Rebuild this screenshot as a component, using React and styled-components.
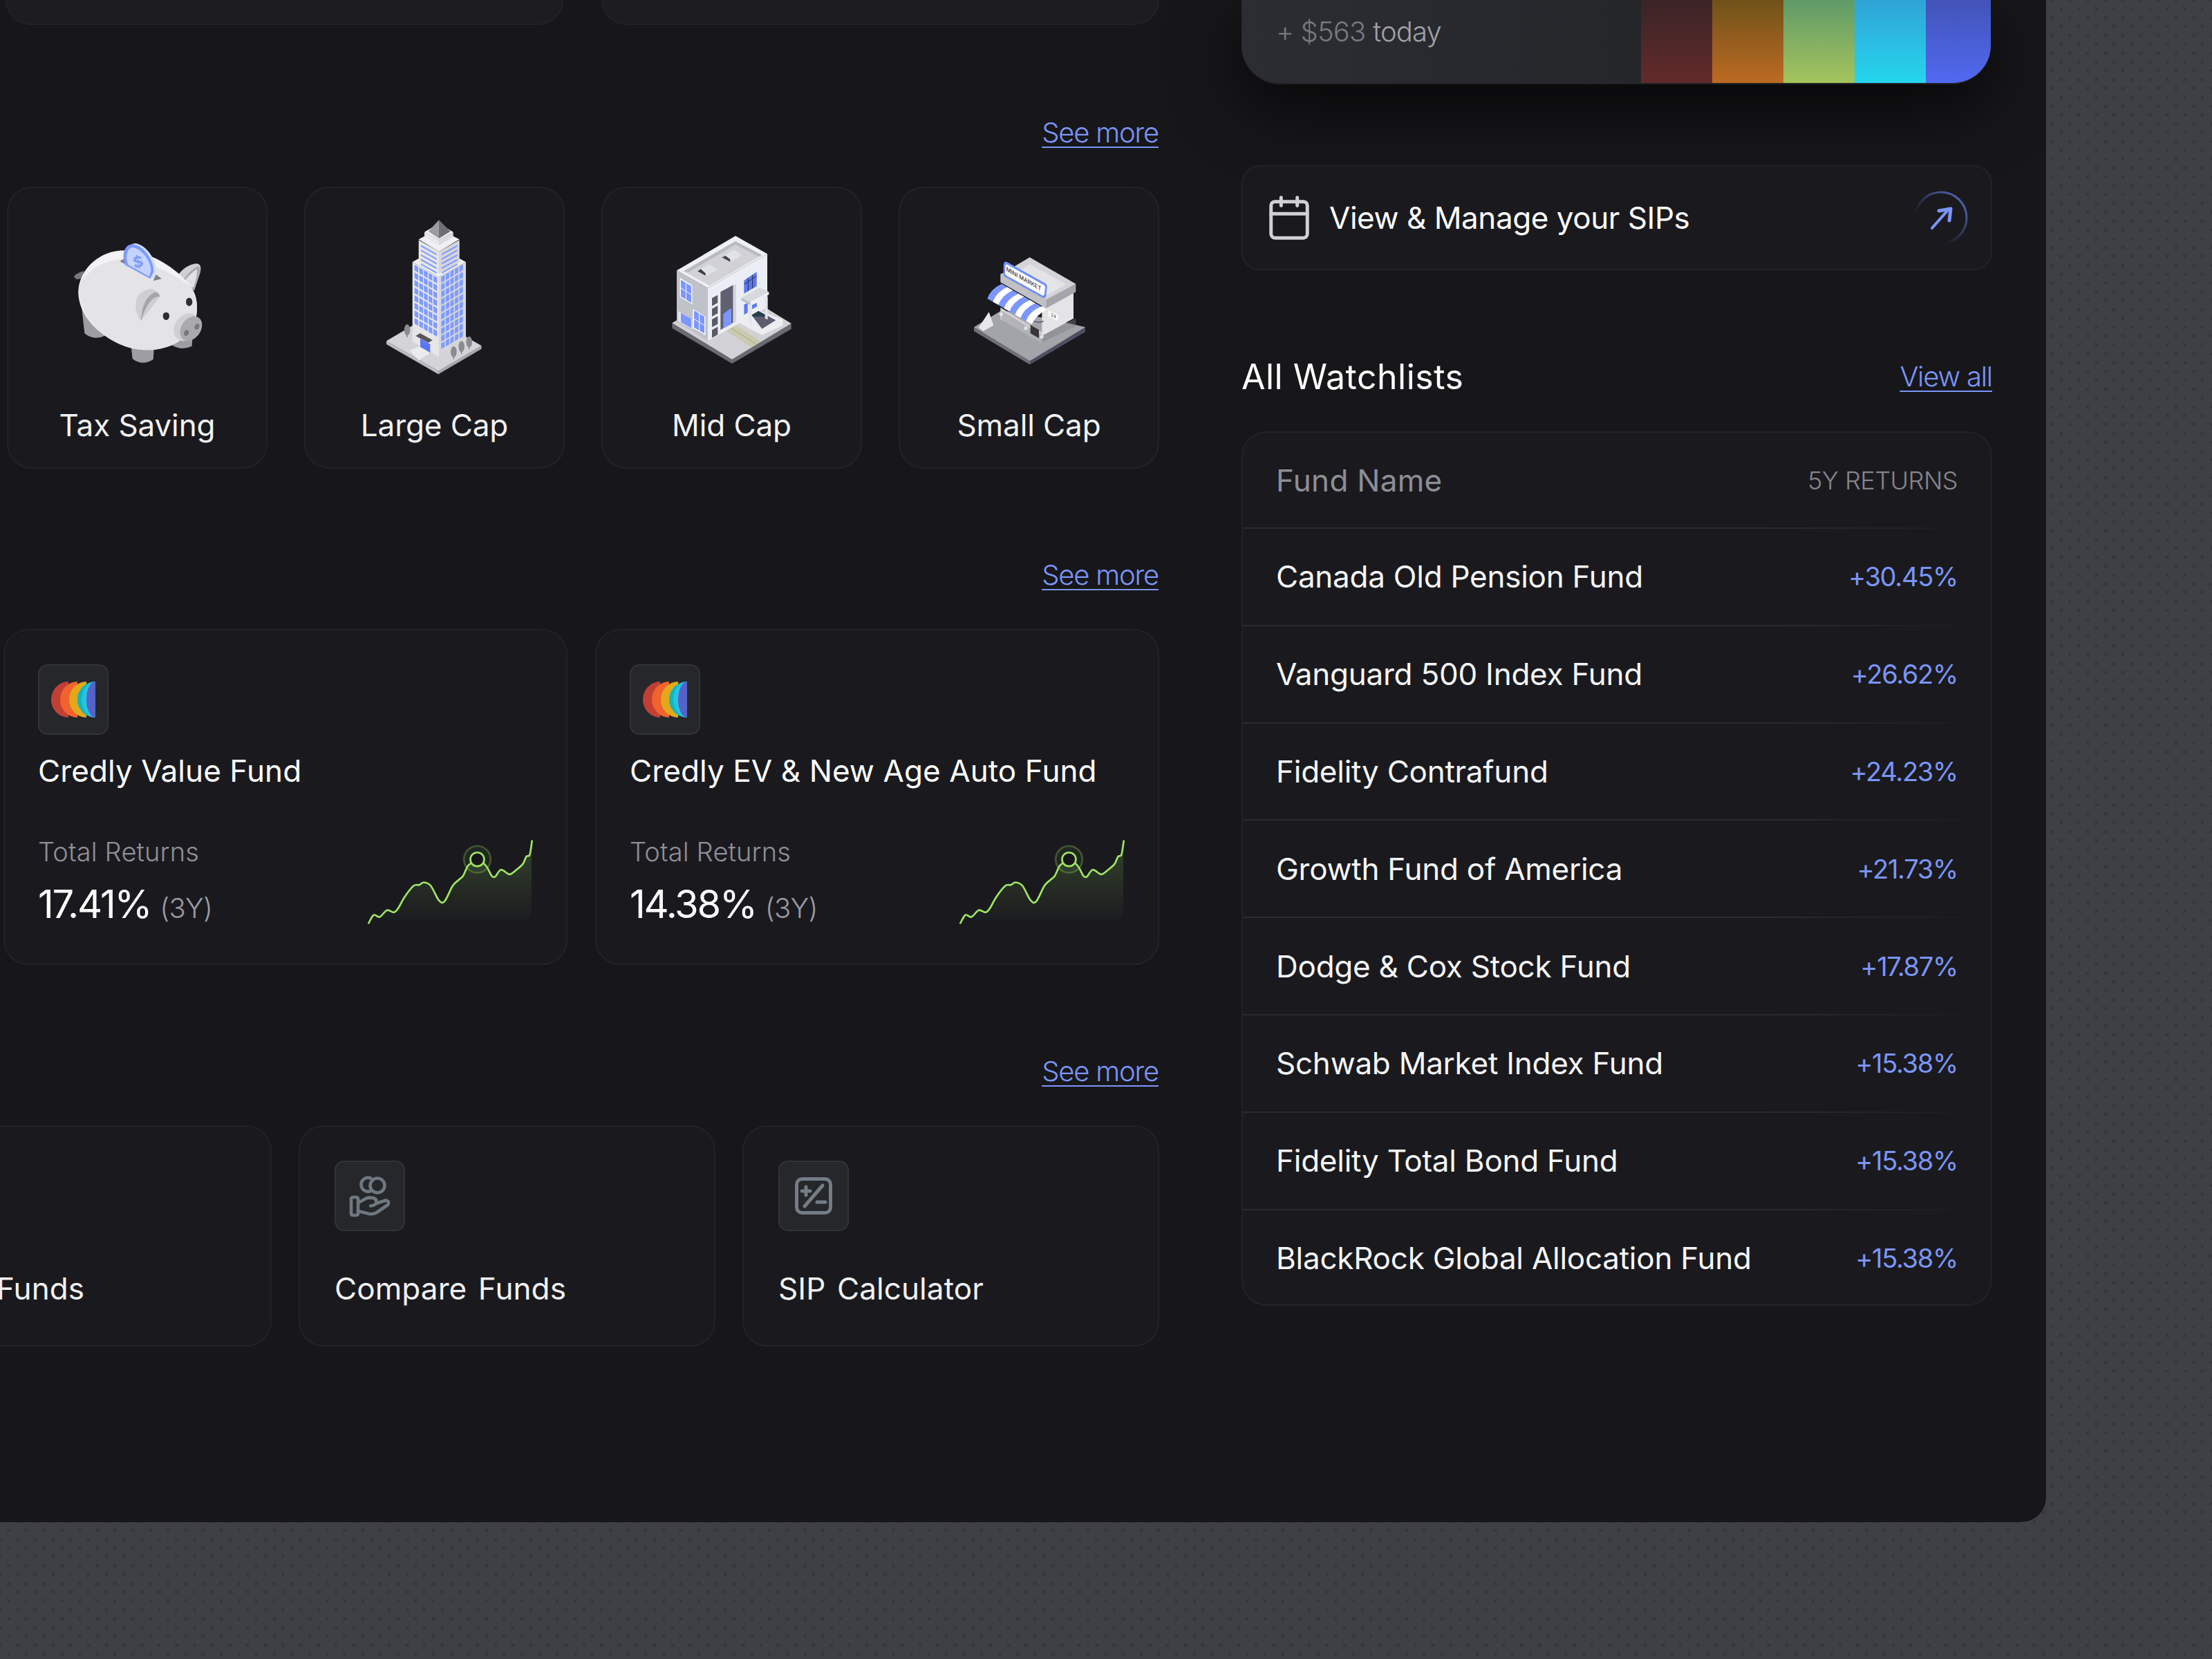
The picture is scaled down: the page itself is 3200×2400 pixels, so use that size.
import React from 'react';
import styled, { createGlobalStyle } from 'styled-components';
import { Calendar, Landmark } from 'lucide-react';

const FONT = "'Inter', 'Liberation Sans', sans-serif";

const dotTile = encodeURIComponent(
  `<svg xmlns="http://www.w3.org/2000/svg" width="25.6" height="25.6" viewBox="0 0 25.6 25.6"><g stroke="#33343a" stroke-width="1.5" fill="none"><path d="M10.4 10.4l4.8 4.8M15.2 10.4l-4.8 4.8"/><path d="M-2.4 -2.4l4.8 4.8M2.4 -2.4l-4.8 4.8"/><path d="M23.2 -2.4l4.8 4.8M28 -2.4l-4.8 4.8"/><path d="M-2.4 23.2l4.8 4.8M2.4 23.2l-4.8 4.8"/><path d="M23.2 23.2l4.8 4.8M28 23.2l-4.8 4.8"/></g></svg>`
);

const GlobalStyle = createGlobalStyle`
  html, body {
    margin: 0;
    padding: 0;
    background: #3f4046;
    font-family: ${FONT};
    -webkit-font-smoothing: antialiased;
  }
  * { box-sizing: border-box; }
`;

const Page = styled.div`
  width: 3200px;
  height: 2400px;
  overflow: hidden;
  background-color: #3f4046;
  background-image: url("data:image/svg+xml,${dotTile}");
  background-size: 25.6px 25.6px;
`;

const Panel = styled.main`
  width: 2960px;
  height: 2202px;
  background: #17171a;
  border-bottom-right-radius: 36px;
  overflow: hidden;
  display: flex;
  gap: 119px;
`;

const LeftColumn = styled.section`
  width: 1677px;
  flex-shrink: 0;
  display: flex;
  flex-direction: column;
`;

const RightColumn = styled.aside`
  width: 1086px;
  flex-shrink: 0;
  display: flex;
  flex-direction: column;
`;

const CardRow = styled.div`
  display: flex;
  justify-content: flex-end;
  gap: ${(p) => p.$gap}px;
`;

const Card = styled.div`
  flex-shrink: 0;
  background: #1a1a1e;
  border: 2px solid #222327;
  border-radius: 36px;
`;

const StubCard = styled(Card)`
  width: 807px;
  height: 36px;
  border-top: none;
  border-radius: 0 0 36px 36px;
  background: #1c1c21;
`;

const SectionHead = styled.div`
  display: flex;
  justify-content: flex-end;
  height: 60px;
  align-items: center;
  padding-right: 1px;
  margin-top: ${(p) => p.$top}px;
  margin-bottom: 48px;
`;

const TextLink = styled.a`
  color: #7c95f7;
  font-size: 40px;
  font-weight: 300;
  line-height: 60px;
  letter-spacing: -1.2px;
  text-decoration: underline;
  text-decoration-thickness: 2px;
  text-underline-offset: 6px;
`;

const CategoryCard = styled(Card)`
  width: 377px;
  height: 408px;
  padding-top: 42px;
  display: flex;
  flex-direction: column;
  align-items: center;
`;

const CategoryLabel = styled.div`
  margin-top: 41px;
  color: #f2f2f4;
  font-size: 44px;
  font-weight: 400;
  line-height: 60px;
  letter-spacing: -0.1px;
`;

const FundCard = styled(Card)`
  width: 816px;
  height: 486px;
  padding: 49px 48px 0;
`;

const IconTile = styled.div`
  width: 102px;
  height: 102px;
  background: #26272b;
  border: 2px solid #323338;
  border-radius: 14px;
  display: flex;
  align-items: center;
  justify-content: center;
  color: #747c85;
`;

const FundTitle = styled.div`
  margin-top: 22px;
  color: #fff;
  font-size: 44px;
  font-weight: 400;
  line-height: 60px;
  letter-spacing: 0.1px;
`;

const ReturnsRow = styled.div`
  margin-top: 62px;
  display: flex;
  justify-content: space-between;
  align-items: flex-end;
`;

const ReturnsLabel = styled.div`
  color: #8f8f98;
  font-size: 38px;
  font-weight: 300;
  line-height: 50px;
  letter-spacing: 0.15px;
`;

const ReturnsValue = styled.div`
  margin-top: 16px;
  color: #fff;
  font-size: 56px;
  font-weight: 400;
  line-height: 70px;
  letter-spacing: -2.2px;
`;

const ReturnsSpan = styled.span`
  margin-left: 13px;
  color: #9a9aa3;
  font-size: 40px;
  font-weight: 300;
  letter-spacing: -0.7px;
`;

const ChartSvg = styled.svg`
  display: block;
  margin-bottom: 9px;
  margin-right: -2px;
`;

const ToolCard = styled(Card)`
  width: 603px;
  height: 320px;
  padding: 49px 50px 0;
`;

const ToolLabel = styled.div`
  margin-top: 53px;
  color: #f2f2f4;
  font-size: 44px;
  font-weight: 400;
  line-height: 60px;
  letter-spacing: 0.1px;
  word-spacing: 4px;
  white-space: nowrap;
`;

const PortfolioStub = styled.div`
  width: 1084px;
  height: 122px;
  display: flex;
  align-items: stretch;
  border-radius: 0 0 56px 56px;
  overflow: hidden;
  background: linear-gradient(90deg, #2c2d32 0%, #1f2023 100%);
  border-bottom: 2px solid #222327;
  box-shadow: 0 30px 100px rgba(0, 0, 0, 0.75);
`;

const TodayText = styled.div`
  flex: 1;
  padding: 0 0 30px 50px;
  display: flex;
  align-items: center;
  gap: 11px;
  color: #a0a0a6;
  font-size: 40px;
  font-weight: 300;
  letter-spacing: -0.9px;
`;

const TodayAmount = styled.span`
  color: #77787e;
`;

const Stripes = styled.div`
  display: flex;
  width: 506px;
`;

const Stripe = styled.div`
  flex: 0 0 103px;
  background: linear-gradient(180deg, ${(p) => p.$from}, ${(p) => p.$to});

  &:last-child {
    flex: 1;
  }
`;

const SipRow = styled(Card)`
  margin-top: 117px;
  height: 152px;
  border-radius: 26px;
  padding: 0 32px;
  display: flex;
  align-items: center;
  gap: 23px;
  color: #d0d0d5;
`;

const SipText = styled.div`
  flex: 1;
  color: #fff;
  font-size: 44px;
  font-weight: 400;
  letter-spacing: -0.45px;
`;

const WatchHead = styled.div`
  margin-top: 124px;
  margin-bottom: 49px;
  height: 60px;
  display: flex;
  justify-content: space-between;
  align-items: center;
`;

const WatchTitle = styled.h2`
  margin: 0;
  color: #fff;
  font-size: 50px;
  font-weight: 400;
  letter-spacing: 0.5px;
`;

const WatchTable = styled(Card)`
  height: 1265px;
  overflow: hidden;
`;

const TableHead = styled.div`
  height: 137px;
  padding: 0 48px;
  display: flex;
  justify-content: space-between;
  align-items: center;
`;

const HeadName = styled.span`
  color: #8e8e96;
  font-size: 44px;
  font-weight: 400;
  letter-spacing: 0.3px;
`;

const HeadReturns = styled.span`
  color: #85858c;
  font-size: 36px;
  font-weight: 300;
  letter-spacing: -0.5px;
`;

const TableRow = styled.div`
  height: 140.8px;
  padding: 0 48px;
  display: flex;
  justify-content: space-between;
  align-items: center;
  border-top: 2px solid;
  border-image: linear-gradient(90deg, #2a2b30 0%, #2a2b30 70%, #1a1a1e 100%) 1;
`;

const RowName = styled.span`
  color: #f6f6f8;
  font-size: 44px;
  font-weight: 400;
  letter-spacing: -0.25px;
`;

const RowReturn = styled.span`
  color: #7c95f7;
  font-size: 38px;
  font-weight: 400;
  letter-spacing: -1.3px;
`;

const smoothPath = (pts) => {
  let d = `M${pts[0][0]} ${pts[0][1]}`;
  for (let i = 0; i < pts.length - 1; i += 1) {
    const p0 = pts[i - 1] || pts[i];
    const p1 = pts[i];
    const p2 = pts[i + 1];
    const p3 = pts[i + 2] || p2;
    const c1x = p1[0] + (p2[0] - p0[0]) / 6;
    const c1y = p1[1] + (p2[1] - p0[1]) / 6;
    const c2x = p2[0] - (p3[0] - p1[0]) / 6;
    const c2y = p2[1] - (p3[1] - p1[1]) / 6;
    d += ` C${c1x.toFixed(1)} ${c1y.toFixed(1)} ${c2x.toFixed(1)} ${c2y.toFixed(1)} ${p2[0]} ${p2[1]}`;
  }
  return d;
};

const CHART_POINTS = [
  [100, 467], [122, 432], [148, 440], [180, 411], [210, 420], [230, 400], [255, 355], [295, 305],
  [320, 301], [340, 290], [370, 305], [405, 368], [430, 372], [465, 305], [490, 280], [510, 262],
  [530, 220], [548, 205], [570, 190], [597, 205], [615, 225], [635, 262], [650, 265], [675, 235],
  [712, 255], [740, 237], [770, 210], [785, 178], [800, 170], [810, 110],
];

const Sparkline = ({ id }) => {
  const line = smoothPath(CHART_POINTS);
  const area = `${smoothPath(CHART_POINTS.slice(0, -1))} L808 170 L808 400 Q808 470 740 470 L230 470 L100 467 Z`;
  return (
    <ChartSvg width="243" height="127" viewBox="90 100 730 380" fill="none">
      <defs>
        <linearGradient id={id} x1="0" y1="170" x2="0" y2="470" gradientUnits="userSpaceOnUse">
          <stop offset="0" stopColor="#9fe665" stopOpacity="0.17" />
          <stop offset="1" stopColor="#9fe665" stopOpacity="0" />
        </linearGradient>
      </defs>
      <path d={area} fill={`url(#${id})`} />
      <path d={line} stroke="#9fe665" strokeWidth="8" strokeLinecap="round" strokeLinejoin="round" />
      <circle cx="572" cy="190" r="58" fill="#9fe665" fillOpacity="0.06" stroke="#9fe665" strokeOpacity="0.28" strokeWidth="8" />
      <circle cx="572" cy="190" r="30" fill="#17171a" stroke="#9fe665" strokeWidth="8" />
    </ChartSvg>
  );
};

const FundLogo = () => (
  <svg width="64" height="52" viewBox="0 0 64 52">
    <path d="M25 0A25 26 0 0 0 25 52Z" fill="#c23f33" />
    <path d="M38 0A25 26 0 0 0 38 52Z" fill="#f0632e" />
    <path d="M51 0A25 26 0 0 0 51 52Z" fill="#e2a81a" />
    <path d="M64 0A26 26 0 0 0 64 52Z" fill="#12b5c0" />
    <path d="M64 0A20 26 0 0 0 64 52Z" fill="#25c4e4" />
    <path d="M64 0A13 26 0 0 0 64 52Z" fill="#5562c8" />
  </svg>
);

const PiggyArt = () => (
  <svg width="240" height="230" viewBox="0 0 720 690">
    <path d="M84 258Q90 245 128 234L124 262Q95 280 84 258Z" fill="#77787d" />
    <path d="M118 395L130 505Q170 538 218 515L205 420Z" fill="#9d9da3" />
    <path d="M508 555Q550 582 596 560L598 525L515 530Z" fill="#9d9da3" />
    <path d="M332 560L338 615Q380 648 428 618L432 562Z" fill="#9d9da3" />
    <path d="M527 264Q565 205 618 202Q640 205 632 240L606 318L555 292Z" fill="#d0d0d4" />
    <path d="M548 292Q580 232 624 212Q636 225 628 245L606 316Z" fill="#a8a8ae" />
    <path d="M552 294Q585 245 618 226Q620 255 603 306Z" fill="#e2e2e5" />
    <path d="M103 320C110 220 200 145 300 145C400 145 520 210 590 300C620 340 625 400 610 450C570 560 450 585 370 575C260 565 100 460 103 320Z" fill="#f3f3f5" />
    <path d="M105 300C140 225 230 178 320 182C420 192 520 250 590 300C620 340 625 400 610 450C570 560 450 585 370 575C260 565 100 460 105 300Z" fill="#e4e4e6" />
    <path d="M283 192L302 180L312 208ZM428 277L440 250L465 268Z" fill="#808086" />
    <path d="M310 170Q312 118 350 114C400 120 442 190 442 232L428 272L310 208Z" fill="#d4dfff" />
    <path d="M298 170Q302 120 338 118C388 122 432 190 430 238L415 268L305 208Z" fill="#7d9bff" />
    <path d="M312 178Q315 132 340 132C380 138 420 195 418 236L410 258L318 206Z" fill="#c4d3ff" />
    <text x="0" y="0" transform="translate(346 222) rotate(-12)" fontFamily={FONT} fontSize="66" fontWeight="700" fill="#7d9bff">$</text>
    <path d="M352 380Q355 320 420 312Q450 318 458 345L375 450Q350 420 352 380Z" fill="#cfcfd3" />
    <path d="M375 450Q380 345 440 325Q452 330 458 345Q410 340 375 450Z" fill="#a5a5ab" />
    <ellipse cx="584" cy="368" rx="14" ry="18" fill="#2c2d30" />
    <ellipse cx="484" cy="430" rx="14" ry="17" fill="#2c2d30" />
    <ellipse cx="572" cy="478" rx="50" ry="64" transform="rotate(35 572 478)" fill="#d0d0d4" />
    <ellipse cx="592" cy="484" rx="42" ry="58" transform="rotate(35 592 484)" fill="#a9a9ae" />
    <ellipse cx="572" cy="503" rx="10" ry="13" transform="rotate(20 572 503)" fill="#77787d" />
    <ellipse cx="618" cy="476" rx="10" ry="13" transform="rotate(20 618 476)" fill="#77787d" />
  </svg>
);

const range = (n) => Array.from({ length: n }, (_, i) => i);

const Tree = ({ x, y }) => (
  <g>
    <rect x={x - 1.5} y={y} width="3" height="32" fill="#5a5b62" />
    <ellipse cx={x} cy={y} rx="13" ry="24" fill="#8b8b92" />
  </g>
);

const TowerArt = () => (
  <svg width="240" height="230" viewBox="0 0 720 690">
    <path d="M150 538L375 668L562 558V572L375 682L150 552Z" fill="#bcbcc2" />
    <path d="M375 668L562 558V572L375 682Z" fill="#a6a6ac" />
    <path d="M150 538L262 472L495 520L562 558L375 668Z" fill="#d4d4d8" />
    <path d="M250 578L298 560L338 592L290 622Z" fill="#ececee" />
    <path d="M263 195L378 262V606L263 540Z" fill="#e6e6e8" />
    <path d="M378 262L495 195V535L378 606Z" fill="#d6d6da" />
    {range(8).map((r) => range(5).map((c) => {
      const x = 272 + c * 20.5;
      const y = 207 + r * 33 + c * 11.8;
      return <path key={`l${r}${c}`} d={`M${x} ${y}l16 9v25l-16 -9z`} fill="#7f9bff" />;
    }))}
    {range(10).map((r) => range(5).map((c) => {
      const x = 388 + c * 19.7;
      const y = 260 + r * 32 - c * 11.4;
      return <path key={`r${r}${c}`} d={`M${x} ${y}l15 -9v25l-15 9z`} fill="#7f9bff" />;
    }))}
    <path d="M263 195L290 180L378 230L467 180L495 195L378 262Z" fill="#efeff1" />
    <path d="M290 100L378 150V245L290 195Z" fill="#e6e6e8" />
    <path d="M378 150L467 100V195L378 245Z" fill="#d6d6da" />
    {range(5).map((i) => (
      <path key={`sl${i}`} d={`M300 ${121 + i * 20}L368 ${159 + i * 20}V${166 + i * 20}L300 ${128 + i * 20}Z`} fill="#7f9bff" />
    ))}
    {range(5).map((i) => (
      <path key={`sr${i}`} d={`M390 ${159 + i * 20}L458 ${121 + i * 20}V${128 + i * 20}L390 ${166 + i * 20}Z`} fill="#7f9bff" />
    ))}
    <path d="M290 97L315 83L378 118L440 83L467 97L378 150Z" fill="#f0f0f2" />
    <path d="M315 65L378 100V122L315 88Z" fill="#e8e8ea" />
    <path d="M378 100L440 65V88L378 122Z" fill="#dcdce0" />
    <path d="M315 65L378 28L440 65L378 100Z" fill="#f4f4f6" />
    <path d="M378 13L332 62L378 93Z" fill="#9b9ba1" />
    <path d="M378 13L428 62L378 93Z" fill="#6f6f76" />
    <path d="M297 528L340 552V588L297 564Z" fill="#5c74f5" />
    <path d="M277 516L296 504L350 534L332 546Z" fill="#55565c" />
    <Tree x={240} y={490} />
    <Tree x={442} y={585} />
    <Tree x={476} y={562} />
    <Tree x={509} y={542} />
  </svg>
);

const MidArt = () => (
  <svg width="240" height="230" viewBox="0 0 720 690">
    <path d="M100 460L360 618L617 462V486L360 636L100 482Z" fill="#6a6b72" />
    <path d="M100 460L255 370L500 390L617 462L360 618Z" fill="#d2d2d6" />
    <path d="M325 488L365 462L485 540L445 565Z" fill="#c9caae" />
    <path d="M345 475L465 552" stroke="#a6a793" strokeWidth="3" />
    <path d="M120 232L255 308V538L120 455Z" fill="#bfc2c9" />
    <path d="M255 308L513 160V392L255 538Z" fill="#eceef5" />
    <path d="M120 232L375 82L513 160L255 308Z" fill="#eef0f6" />
    <path d="M150 235L375 105L490 165L262 298Z" fill="#d2d2d6" />
    <path d="M150 235L375 105L490 165L478 172L375 120L170 240Z" fill="#b7bac1" />
    <path d="M210 235L262 205L298 228L248 255Z" fill="#dfe3e8" />
    <path d="M210 235L245 254V244L225 226Z" fill="#3f4046" />
    <path d="M316 175L368 142L404 165L352 195Z" fill="#dfe3e8" />
    <path d="M316 175L352 194V184L332 168Z" fill="#3f4046" />
    <path d="M134 264L187 296V378L134 347Z" fill="#ffffff" />
    <path d="M138 272L183 299V372L138 345Z" fill="#7c96fb" />
    <path d="M160 286V360M138 308L183 336" stroke="#fff" strokeWidth="3" />
    <path d="M126 408L187 444V488L126 452Z" fill="#e4e6ec" />
    <path d="M138 416L183 442V482L138 456Z" fill="#7c96fb" />
    <path d="M190 400L244 432V512L190 482Z" fill="#fff" />
    <path d="M195 406L240 432V505L195 480Z" fill="#7c96fb" />
    <path d="M218 418V494M195 442L240 470" stroke="#fff" strokeWidth="3" />
    {range(4).map((i) => (
      <path key={i} d={`M273 ${352 + i * 46}L298 ${338 + i * 46}V${372 + i * 46}L273 ${386 + i * 46}Z`} fill="#5a5b66" />
    ))}
    <path d="M310 325L365 295V458L310 490Z" fill="#5f6070" />
    <path d="M365 295L378 290V455L365 462Z" fill="#d4d6dd" />
    <path d="M322 420L357 395V465L322 482Z" fill="#7d96ff" />
    <path d="M412 275L467 238V300L412 332Z" fill="#5d78f0" />
    <path d="M430 264V322M449 252V310M412 292L467 256" stroke="#2a2d40" strokeWidth="3" />
    <path d="M412 380L428 372V415L412 424ZM447 382L468 372V388L447 400Z" fill="#5d78f0" />
    <path d="M395 445L475 405L580 445V470L490 512L395 462Z" fill="#ecedf1" />
    <path d="M445 425L475 408L550 448L490 485Z" fill="#5c5d6e" />
    <path d="M445 425L475 408L520 432L450 432Z" fill="#25414f" />
    <path d="M432 372H446V462L432 455ZM503 345H515V445L503 440Z" fill="#e2e4ea" />
    <path d="M400 350L480 305L520 325L440 370Z" fill="#d6d9de" />
    <path d="M400 350L440 370V382L400 362Z" fill="#bcc0c7" />
    <path d="M440 370L520 325V337L440 382Z" fill="#eef0f6" />
  </svg>
);

const awningStripe = (i) => {
  const tx = 240 + i * 24.5;
  const ty = 290 + i * 14;
  const bx = 178 + i * 24;
  const by = 354 + i * 14;
  return `M${tx} ${ty}L${tx + 24.5} ${ty + 14}Q${bx + 44} ${by - 28} ${bx + 25} ${by + 14}L${bx} ${by}Q${bx + 14} ${by - 42} ${tx} ${ty}Z`;
};

const MarketArt = () => (
  <svg width="240" height="230" viewBox="0 0 720 690">
    <path d="M120 478L362 625L603 478V498L362 640L120 495Z" fill="#6f7078" />
    <path d="M362 625L603 478V498L362 640Z" fill="#4c5060" />
    <path d="M120 478L240 405L440 440L603 478L362 625Z" fill="#a3a3aa" />
    <path d="M235 392L415 500V548L235 445Z" fill="#d0d0d4" />
    {range(7).map((i) => (
      <path key={i} d={`M240 ${410 + i * 6}L415 ${516 + i * 5}M415 ${518 + i * 4}L562 ${442 + i * 5}`} stroke="#7f8086" strokeWidth="2" />
    ))}
    <path d="M415 370L552 300V440L415 516Z" fill="#e4e4e6" />
    <path d="M365 468L402 490V526L365 505Z" fill="#3a3538" />
    <path d="M375 450Q400 462 422 452" stroke="#4c5060" strokeWidth="4" fill="none" />
    <circle cx="238" cy="422" r="8" fill="#e4e4e6" />
    <circle cx="345" cy="482" r="8" fill="#e4e4e6" />
    <circle cx="414" cy="520" r="8" fill="#e4e4e6" />
    <path d="M235 250L362 175L562 290L433 365Z" fill="#d4d4d8" />
    <path d="M300 240L362 205L520 292L440 338Z" fill="#e4e4e6" />
    <path d="M235 245L433 358V396L235 283Z" fill="#c0c0c5" />
    <path d="M433 358L562 290V325L433 396Z" fill="#a5a5ab" />
    {range(8).map((i) => (
      <path key={i} d={awningStripe(i)} fill={i % 2 === 0 ? '#7c96fb' : '#ffffff'} />
    ))}
    <path d="M248 208Q250 188 264 195L430 288Q438 294 437 305L433 342Q430 356 418 350L256 260Q247 255 248 245Z" fill="#6f8df5" />
    <path d="M256 212Q258 202 266 207L426 296Q430 300 429 306L425 336Q423 344 416 340L262 254Q255 250 255 244Z" fill="#fafafc" />
    <text transform="matrix(0.87 0.5 0 1 260 234)" fontFamily={FONT} fontSize="26" fontWeight="500" fill="#3a3b40">MINI MARKET</text>
    <path d="M140 480L185 412L205 470L160 495Z" fill="#e8e8ea" />
    <path d="M442 404L488 426L483 450L442 430Z" fill="#fafafc" />
    <text transform="matrix(0.9 0.42 0 1 454 430)" fontFamily={FONT} fontSize="20" fill="#3a3b40">24</text>
  </svg>
);

const ArrowBadge = () => (
  <svg width="80" height="80" viewBox="0 0 80 80" fill="none">
    <defs>
      <linearGradient id="badgeArc" x1="1" y1="0" x2="0" y2="1">
        <stop offset="0" stopColor="#5c70c9" />
        <stop offset="0.7" stopColor="#5c70c9" stopOpacity="0" />
      </linearGradient>
    </defs>
    <circle cx="40" cy="40" r="37" stroke="url(#badgeArc)" strokeWidth="3" />
    <path d="M27 55L50 29" stroke="#7c95f7" strokeWidth="4" strokeLinecap="round" />
    <path d="M37 30L54 27L52 44" stroke="#7c95f7" strokeWidth="5" strokeLinecap="round" strokeLinejoin="round" />
  </svg>
);

const PercentIcon = () => (
  <svg width="54" height="54" viewBox="0 0 54 54" fill="none" stroke="#747c85" strokeWidth="5" strokeLinecap="round">
    <rect x="2.5" y="2.5" width="49" height="49" rx="8" />
    <path d="M40 12L14 42M16 14V26M10 20H22M32 36H44" />
  </svg>
);

const CoinHandIcon = () => (
  <svg width="90" height="80" viewBox="0 0 90 80" fill="none" stroke="#6f7880" strokeWidth="4.6" strokeLinecap="round" strokeLinejoin="round">
    <path d="M46 33A10 10 0 1 1 46.5 14.5" />
    <circle cx="56" cy="25" r="10.5" />
    <rect x="18" y="42" width="10" height="26" rx="2.5" />
    <path d="M28 50L40 43.5Q43 42 50 43Q56 45 54 51Q52 54 46 54.5" />
    <path d="M54 51L68 46.5Q74 47 71 53L55 64Q50 67 44 66L28 62" />
  </svg>
);

const STRIPES = [
  ['#3a2426', '#632a2a'],
  ['#6f5219', '#bd6a22'],
  ['#5f9a68', '#a5c45c'],
  ['#30a3d6', '#25d6ee'],
  ['#4254b8', '#5169f0'],
];

const WATCHLIST = [
  ['Canada Old Pension Fund', '+30.45%'],
  ['Vanguard 500 Index Fund', '+26.62%'],
  ['Fidelity Contrafund', '+24.23%'],
  ['Growth Fund of America', '+21.73%'],
  ['Dodge & Cox Stock Fund', '+17.87%'],
  ['Schwab Market Index Fund', '+15.38%'],
  ['Fidelity Total Bond Fund', '+15.38%'],
  ['BlackRock Global Allocation Fund', '+15.38%'],
];

const App = () => (
  <Page>
    <GlobalStyle />
    <Panel>
      <LeftColumn>
        <CardRow $gap={55}>
          <StubCard />
          <StubCard />
        </CardRow>

        <SectionHead $top={126}><TextLink>See more</TextLink></SectionHead>
        <CardRow $gap={53}>
          <CategoryCard><PiggyArt /><CategoryLabel>Tax Saving</CategoryLabel></CategoryCard>
          <CategoryCard><TowerArt /><CategoryLabel>Large Cap</CategoryLabel></CategoryCard>
          <CategoryCard><MidArt /><CategoryLabel>Mid Cap</CategoryLabel></CategoryCard>
          <CategoryCard><MarketArt /><CategoryLabel>Small Cap</CategoryLabel></CategoryCard>
        </CardRow>

        <SectionHead $top={124}><TextLink>See more</TextLink></SectionHead>
        <CardRow $gap={40}>
          <FundCard>
            <IconTile><FundLogo /></IconTile>
            <FundTitle>Credly Value Fund</FundTitle>
            <ReturnsRow>
              <div>
                <ReturnsLabel>Total Returns</ReturnsLabel>
                <ReturnsValue>17.41%<ReturnsSpan>(3Y)</ReturnsSpan></ReturnsValue>
              </div>
              <Sparkline id="sparkA" />
            </ReturnsRow>
          </FundCard>
          <FundCard>
            <IconTile><FundLogo /></IconTile>
            <FundTitle>Credly EV &amp; New Age Auto Fund</FundTitle>
            <ReturnsRow>
              <div>
                <ReturnsLabel>Total Returns</ReturnsLabel>
                <ReturnsValue>14.38%<ReturnsSpan>(3Y)</ReturnsSpan></ReturnsValue>
              </div>
              <Sparkline id="sparkB" />
            </ReturnsRow>
          </FundCard>
        </CardRow>

        <SectionHead $top={124}><TextLink>See more</TextLink></SectionHead>
        <CardRow $gap={39}>
          <ToolCard>
            <IconTile><Landmark size={60} strokeWidth={1.8} /></IconTile>
            <ToolLabel>Sector Funds</ToolLabel>
          </ToolCard>
          <ToolCard>
            <IconTile><CoinHandIcon /></IconTile>
            <ToolLabel>Compare Funds</ToolLabel>
          </ToolCard>
          <ToolCard>
            <IconTile><PercentIcon /></IconTile>
            <ToolLabel>SIP Calculator</ToolLabel>
          </ToolCard>
        </CardRow>
      </LeftColumn>

      <RightColumn>
        <PortfolioStub>
          <TodayText><TodayAmount>+ $563</TodayAmount>today</TodayText>
          <Stripes>
            {STRIPES.map(([from, to]) => <Stripe key={from} $from={from} $to={to} />)}
          </Stripes>
        </PortfolioStub>

        <SipRow>
          <Calendar size={70} strokeWidth={1.7} />
          <SipText>View &amp; Manage your SIPs</SipText>
          <ArrowBadge />
        </SipRow>

        <WatchHead>
          <WatchTitle>All Watchlists</WatchTitle>
          <TextLink>View all</TextLink>
        </WatchHead>

        <WatchTable>
          <TableHead>
            <HeadName>Fund Name</HeadName>
            <HeadReturns>5Y RETURNS</HeadReturns>
          </TableHead>
          {WATCHLIST.map(([name, value]) => (
            <TableRow key={name}>
              <RowName>{name}</RowName>
              <RowReturn>{value}</RowReturn>
            </TableRow>
          ))}
        </WatchTable>
      </RightColumn>
    </Panel>
  </Page>
);

export default App;
